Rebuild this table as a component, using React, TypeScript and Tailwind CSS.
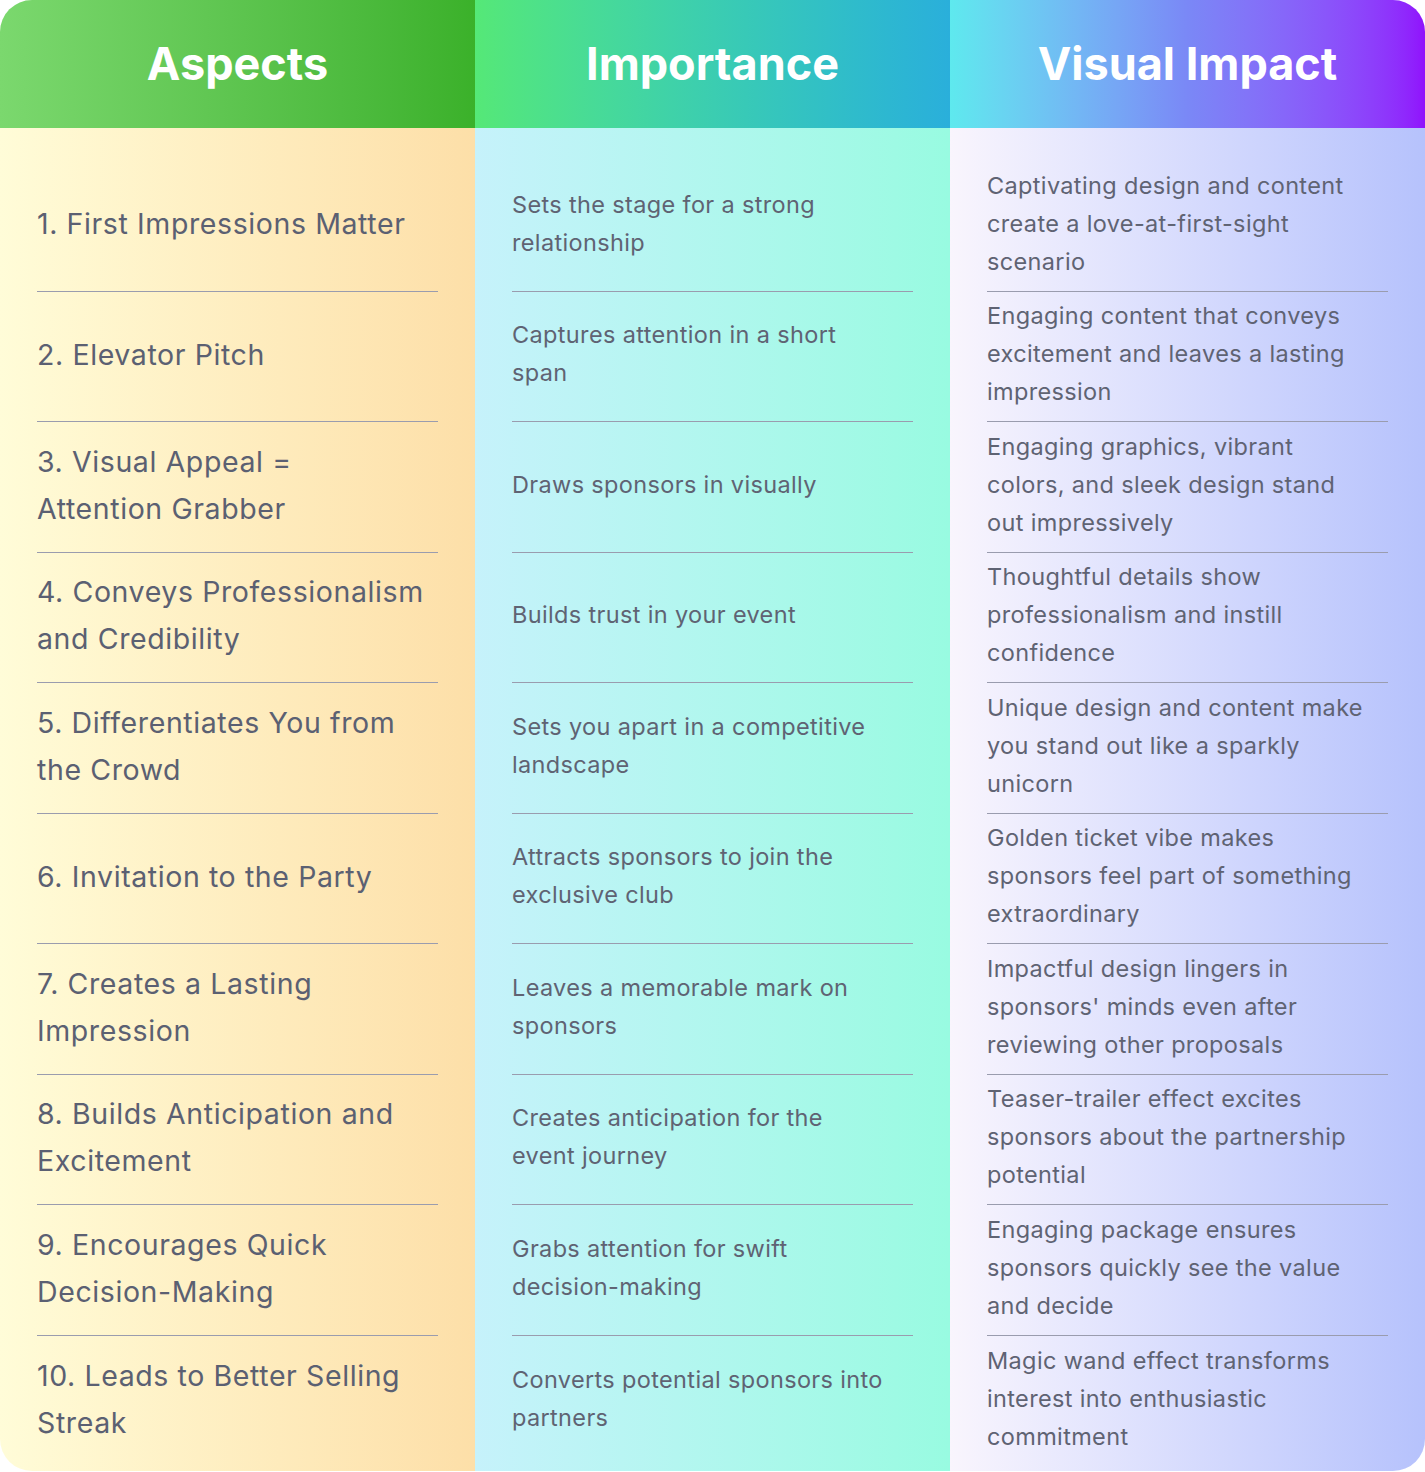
const aspects = [
  "1. First Impressions Matter",
  "2. Elevator Pitch",
  "3. Visual Appeal = Attention Grabber",
  "4. Conveys Professionalism and Credibility",
  "5. Differentiates You from the Crowd",
  "6. Invitation to the Party",
  "7. Creates a Lasting Impression",
  "8. Builds Anticipation and Excitement",
  "9. Encourages Quick Decision-Making",
  "10. Leads to Better Selling Streak",
];

const importance = [
  "Sets the stage for a strong relationship",
  "Captures attention in a short span",
  "Draws sponsors in visually",
  "Builds trust in your event",
  "Sets you apart in a competitive landscape",
  "Attracts sponsors to join the exclusive club",
  "Leaves a memorable mark on sponsors",
  "Creates anticipation for the event journey",
  "Grabs attention for swift decision-making",
  "Converts potential sponsors into partners",
];

const impact = [
  "Captivating design and content create a love-at-first-sight scenario",
  "Engaging content that conveys excitement and leaves a lasting impression",
  "Engaging graphics, vibrant colors, and sleek design stand out impressively",
  "Thoughtful details show professionalism and instill confidence",
  "Unique design and content make you stand out like a sparkly unicorn",
  "Golden ticket vibe makes sponsors feel part of something extraordinary",
  "Impactful design lingers in sponsors' minds even after reviewing other proposals",
  "Teaser-trailer effect excites sponsors about the partnership potential",
  "Engaging package ensures sponsors quickly see the value and decide",
  "Magic wand effect transforms interest into enthusiastic commitment",
];

type ColProps = {
  title: string;
  items: string[];
  headClass: string;
  bodyClass: string;
  big?: boolean;
};

const Column = ({ title, items, headClass, bodyClass, big }: ColProps) => (
  <div className="flex flex-col">
    <div className={`h-[128px] flex items-center justify-center ${headClass}`}>
      <h2 className="text-[45px] font-bold text-white">{title}</h2>
    </div>
    <div className={`flex-1 px-[37px] pt-[33px] pb-[5px] ${bodyClass}`}>
      {items.map((item, i) => (
        <div
          key={i}
          className={`h-[130.5px] pb-[4px] flex items-center ${
            i < items.length - 1 ? "border-b border-[#9a9cae]" : ""
          }`}
        >
          <p
            className={
              big
                ? "max-w-[387px] text-[28.5px] leading-[47px] tracking-[0.6px] text-[#5b6072]"
                : "max-w-[377px] text-[23.5px] leading-[38px] tracking-[0.35px] text-[#5f6373]"
            }
          >
            {item}
          </p>
        </div>
      ))}
    </div>
  </div>
);

export default function App() {
  return (
    <div className="w-[1425px] bg-white" style={{ fontFamily: "Inter, 'Noto Sans', sans-serif" }}>
      <div className="grid grid-cols-3 rounded-[32px] overflow-hidden">
        <Column
          title="Aspects"
          items={aspects}
          big
          headClass="bg-linear-to-r from-[#7bd86e] to-[#3bb12a]"
          bodyClass="bg-linear-to-r from-[#fffcd8] to-[#fddfa8]"
        />
        <Column
          title="Importance"
          items={importance}
          headClass="bg-linear-to-r from-[#55e877] to-[#2aafdb]"
          bodyClass="bg-linear-to-r from-[#c6f2fb] to-[#98fbe1]"
        />
        <Column
          title="Visual Impact"
          items={impact}
          headClass="bg-linear-to-r from-[#5ee9ee] via-[#7a88f6] to-[#9010fc]"
          bodyClass="bg-linear-to-r from-[#f9f5fd] to-[#b6c2fc]"
        />
      </div>
    </div>
  );
}
